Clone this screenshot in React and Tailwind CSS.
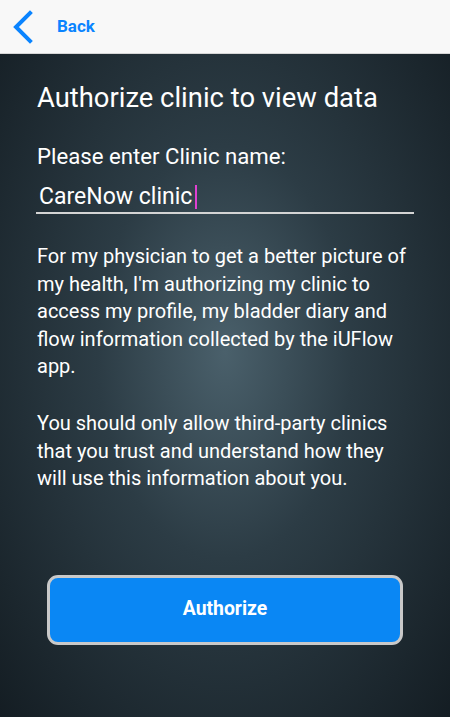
import React from 'react';

export default function App() {
  return (
    <div className="w-[450px] h-[717px] flex flex-col font-['Roboto',sans-serif] overflow-hidden">
      {/* header */}
      <div className="h-[54px] shrink-0 flex items-center bg-[#f8f8f8] border-b border-[#d6d6d6]">
        <svg width="24" height="34" viewBox="0 0 24 34" className="ml-[11px]">
          <path d="M19 3 L5 17 L19 31" fill="none" stroke="#0a84ff" strokeWidth="4" strokeLinecap="square" />
        </svg>
        <span className="ml-[22px] text-[17px] font-bold text-[#0a84ff]">Back</span>
      </div>

      <div className="flex-1 flex flex-col bg-[radial-gradient(ellipse_at_50%_45%,#4a606b_0%,#2c3c45_40%,#141d23_100%)] pl-[37px] pr-[36px]">
        <h1 className="mt-[28px] text-[27.4px] leading-[32px] text-white">Authorize clinic to view data</h1>

        <label className="mt-[28px] text-[22.2px] leading-[28px] text-white">Please enter Clinic name:</label>
        <div className="mt-[12px] flex items-center border-b-2 border-[#d4d4d4] -ml-[1px]">
          <span className="ml-[3px] text-[23px] leading-[30px] text-white">CareNow clinic</span>
          <span className="ml-[3px] w-[2px] h-[24px] bg-[#e040d0]" />
        </div>

        <div className="mt-[29px] text-[20px] leading-[27.5px] text-white">
          <p>For my physician to get a better picture of my health, I'm authorizing my clinic to access my profile, my bladder diary and flow information collected by the iUFlow app.</p>
          <p className="mt-[29.5px]">You should only allow third-party clinics that you trust and understand how they will use this information about you.</p>
        </div>

        <div className="flex-1" />
        <button className="mb-[72px] ml-[10px] mr-[11px] h-[70px] rounded-[11px] border-[3px] border-[#c9c9c9] bg-[#0a87f4] pb-[2px] text-white text-[19.4px] font-bold">
          Authorize
        </button>
      </div>
    </div>
  );
}
